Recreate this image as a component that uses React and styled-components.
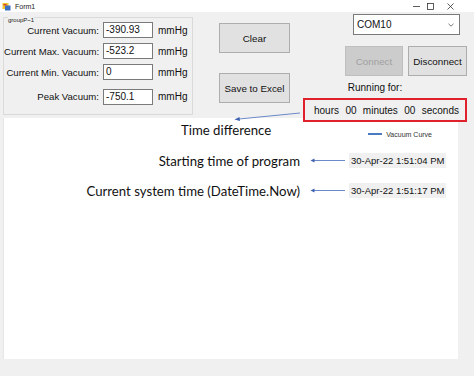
import styled, { createGlobalStyle } from "styled-components";

const GlobalStyle = createGlobalStyle`
  html, body {
    margin: 0;
    padding: 0;
    background: #f0f0f0;
    font-family: "Liberation Sans", Arial, sans-serif;
    overflow: hidden;
  }
  #root {
    width: 474px;
    height: 376px;
  }
`;

const Window = styled.div`
  position: relative;
  width: 474px;
  height: 376px;
  background: #f0f0f0;
  display: flex;
  flex-direction: column;
`;

const TitleBar = styled.div`
  height: 12px;
  background: #ffffff;
  display: flex;
  align-items: center;
  padding-left: 2px;
  font-size: 7px;
  color: #222;
  gap: 4px;
`;

const TitleText = styled.span`
  flex: 1;
`;

const WinControls = styled.div`
  display: flex;
  align-items: center;
  height: 12px;
  padding-right: 12px;
`;

const WinBtn = styled.div`
  width: ${(p) => p.w}px;
  display: flex;
  justify-content: center;
  align-items: center;
`;

const Top = styled.div`
  height: 106px;
  display: flex;
  align-items: flex-start;
  position: relative;
  z-index: 1;
`;

const GroupBox = styled.div`
  position: relative;
  margin: 5px 0 0 3px;
  width: 188px;
  height: 96px;
  border: 1px solid #dadada;
`;

const GroupLabel = styled.span`
  position: absolute;
  top: -1px;
  left: 4px;
  font-size: 6px;
  color: #222;
  background: #f0f0f0;
  line-height: 7px;
`;

const FieldGrid = styled.div`
  display: grid;
  grid-template-columns: 95px 50px auto;
  grid-template-rows: 16px 16px 16px 16px;
  row-gap: 5px;
  column-gap: 4px;
  padding-top: 4px;
  align-items: center;
`;

const FieldLabel = styled.span`
  font-size: 9.6px;
  color: #111;
  text-align: right;
  white-space: nowrap;
  margin-top: ${(p) => p.shift || 0}px;
`;

const FieldBox = styled.div`
  height: 16px;
  box-sizing: border-box;
  border: 1px solid #7a7a7a;
  background: #fff;
  font-size: 10px;
  line-height: 14px;
  padding-left: 2px;
  color: #111;
  margin-top: ${(p) => p.shift || 0}px;
`;

const Unit = styled.span`
  font-size: 10px;
  color: #111;
  padding-left: 1px;
  margin-top: ${(p) => p.shift || 0}px;
`;

const ButtonCol = styled.div`
  margin: 11px 0 0 26px;
  display: flex;
  flex-direction: column;
  gap: 20px;
`;

const Button = styled.div`
  width: ${(p) => p.w || 71}px;
  height: 30px;
  box-sizing: border-box;
  border: 1px solid ${(p) => (p.disabled ? "#bfbfbf" : "#adadad")};
  background: ${(p) => (p.disabled ? "#cccccc" : "#e1e1e1")};
  color: ${(p) => (p.disabled ? "#a0a0a0" : "#111")};
  font-size: 9.8px;
  display: flex;
  align-items: center;
  justify-content: center;
`;

const RightCol = styled.div`
  margin: 2px 0 0 13px;
  width: 164px;
  display: flex;
  flex-direction: column;
`;

const Combo = styled.div`
  margin-left: 50px;
  width: 107px;
  height: 21px;
  box-sizing: border-box;
  border: 1px solid #7a7a7a;
  background: #fff;
  display: flex;
  align-items: center;
  justify-content: space-between;
  padding: 0 5px 0 3px;
  font-size: 10px;
  color: #111;
`;

const ConnRow = styled.div`
  margin: 11px 0 0 42px;
  display: flex;
  gap: 5px;
`;

const RunningLabel = styled.div`
  margin: 6px 0 0 42px;
  width: 60px;
  text-align: center;
  font-size: 10px;
  color: #111;
`;

const TimeBox = styled.div`
  margin-top: 5px;
  height: 24px;
  box-sizing: border-box;
  border: 2px solid #e0202a;
  display: flex;
  align-items: center;
  justify-content: space-between;
  padding: 0 6px 0 9px;
  font-size: 10px;
  color: #111;
  background: #f0f0f0;
`;

const Panel = styled.div`
  margin-left: 3px;
  width: 455px;
  height: 241px;
  background: #ffffff;
  border-left: 1px solid #e6e6e6;
  box-sizing: border-box;
  display: flex;
  flex-direction: column;
`;

const HeadRow = styled.div`
  display: flex;
  align-items: center;
  margin-top: 3px;
  height: 18px;
`;

const Note = styled.span`
  font-family: Lato, "Open Sans", sans-serif;
  font-size: 13.2px;
  color: #111;
  white-space: nowrap;
`;

const TimeDiff = styled(Note)`
  margin-left: 177px;
`;

const Legend = styled.div`
  margin-left: auto;
  margin-right: 26px;
  margin-top: 8px;
  display: flex;
  align-items: center;
  gap: 4px;
  font-size: 7px;
  color: #333;
`;

const LegendLine = styled.span`
  width: 14px;
  height: 2px;
  background: #4a7ac0;
`;

const NoteRow = styled.div`
  display: grid;
  grid-template-columns: 296px 49px auto;
  align-items: center;
  height: 17px;
  margin-top: ${(p) => p.top}px;
`;

const NoteText = styled(Note)`
  text-align: right;
`;

const Stamp = styled.span`
  justify-self: start;
  background: #f0f0f0;
  font-size: 9.5px;
  color: #111;
  padding: 2px 2px;
  line-height: 11px;
`;

const Overlay = styled.svg`
  position: absolute;
  left: 0;
  top: 0;
  pointer-events: none;
  z-index: 2;
`;

const FormIcon = () => (
  <svg width="9" height="9" viewBox="0 0 9 9">
    <rect x="0.5" y="1" width="6" height="6" fill="#f2c230" />
    <rect x="3" y="3.5" width="5.5" height="5" fill="#3a6fc4" />
    <rect x="1.5" y="2" width="3" height="1.5" fill="#d24a2a" />
  </svg>
);

const LeftArrow = () => (
  <svg width="36" height="7" viewBox="0 0 36 7" style={{ marginLeft: 10 }}>
    <line x1="3" y1="3.5" x2="35" y2="3.5" stroke="#5a7dc4" strokeWidth="0.9" />
    <path d="M0.5 3.5 L4.5 1.6 L4.5 5.4 Z" fill="#3f62b0" />
  </svg>
);

const fields = [
  { label: "Current Vacuum:", value: "-390.93", shift: 0 },
  { label: "Current Max. Vacuum:", value: "-523.2", shift: 0 },
  { label: "Current Min. Vacuum:", value: "0", shift: 0 },
  { label: "Peak Vacuum:", value: "-750.1", shift: 7 },
];

export default function App() {
  return (
    <>
      <GlobalStyle />
      <Window>
        <TitleBar>
          <FormIcon />
          <TitleText>Form1</TitleText>
          <WinControls>
            <WinBtn w={12}>
              <svg width="7" height="3" viewBox="0 0 7 3">
                <line x1="0" y1="1.5" x2="7" y2="1.5" stroke="#333" strokeWidth="0.8" />
              </svg>
            </WinBtn>
            <WinBtn w={16}>
              <svg width="7" height="7" viewBox="0 0 7 7">
                <rect x="0.5" y="0.5" width="6" height="6" fill="none" stroke="#333" strokeWidth="0.8" />
              </svg>
            </WinBtn>
            <WinBtn w={24}>
              <svg width="7" height="7" viewBox="0 0 7 7">
                <path d="M0.5 0.5 L6.5 6.5 M6.5 0.5 L0.5 6.5" stroke="#333" strokeWidth="0.8" />
              </svg>
            </WinBtn>
          </WinControls>
        </TitleBar>

        <Top>
          <GroupBox>
            <GroupLabel>groupP~1</GroupLabel>
            <FieldGrid>
              {fields.map((f) => (
                <>
                  <FieldLabel key={f.label} shift={f.shift}>{f.label}</FieldLabel>
                  <FieldBox shift={f.shift}>{f.value}</FieldBox>
                  <Unit shift={f.shift}>mmHg</Unit>
                </>
              ))}
            </FieldGrid>
          </GroupBox>

          <ButtonCol>
            <Button>Clear</Button>
            <Button>Save to Excel</Button>
          </ButtonCol>

          <RightCol>
            <Combo>
              <span>COM10</span>
              <svg width="6" height="4" viewBox="0 0 6 4">
                <path d="M0.5 0.8 L3 3.2 L5.5 0.8" fill="none" stroke="#555" strokeWidth="0.8" />
              </svg>
            </Combo>
            <ConnRow>
              <Button w={58} disabled>Connect</Button>
              <Button w={59}>Disconnect</Button>
            </ConnRow>
            <RunningLabel>Running for:</RunningLabel>
            <TimeBox>
              <span>hours</span>
              <span>00</span>
              <span>minutes</span>
              <span>00</span>
              <span>seconds</span>
            </TimeBox>
          </RightCol>
        </Top>

        <Panel>
          <HeadRow>
            <TimeDiff>Time difference</TimeDiff>
            <Legend>
              <LegendLine />
              <span>Vacuum Curve</span>
            </Legend>
          </HeadRow>
          <NoteRow top={13}>
            <NoteText>Starting time of program</NoteText>
            <LeftArrow />
            <Stamp>30-Apr-22 1:51:04 PM</Stamp>
          </NoteRow>
          <NoteRow top={13}>
            <NoteText>Current system time (DateTime.Now)</NoteText>
            <LeftArrow />
            <Stamp>30-Apr-22 1:51:17 PM</Stamp>
          </NoteRow>
        </Panel>

        <Overlay width="474" height="376" viewBox="0 0 474 376">
          <line x1="300" y1="113" x2="239" y2="119" stroke="#5a7dc4" strokeWidth="0.9" />
          <path d="M234.5 119.5 L239.5 117 L240 121 Z" fill="#3f62b0" />
        </Overlay>
      </Window>
    </>
  );
}
